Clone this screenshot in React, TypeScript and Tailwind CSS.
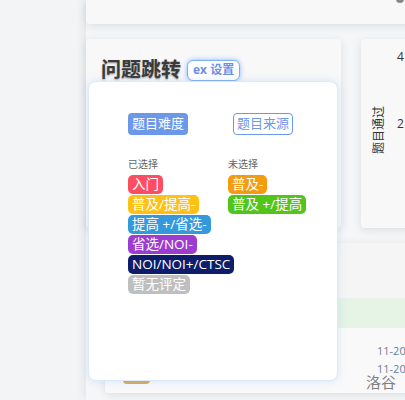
// Problem-jump panel with the difficulty filter popover open.

const FONT = "font-['Open_Sans','Noto_Sans_CJK_SC',sans-serif]";

const selected = [
  { label: "入门", bg: "bg-[#fe4c61]" },
  { label: "普及/提高-", bg: "bg-[#ffc116]" },
  { label: "提高 +/省选-", bg: "bg-[#3498db]" },
  { label: "省选/NOI-", bg: "bg-[#9d3dcf]" },
  { label: "NOI/NOI+/CTSC", bg: "bg-[#0e1d69]" },
  { label: "暂无评定", bg: "bg-[#bfbfbf]" },
];

const unselected = [
  { label: "普及-", bg: "bg-[#f39c11]" },
  { label: "普及 +/提高", bg: "bg-[#52c41a]" },
];

function Tag({ label, bg }: { label: string; bg: string }) {
  return (
    <span className={`inline-flex h-[19px] items-center rounded-[5px] px-1 text-[13.5px] leading-none text-white ${bg}`}>
      {label}
    </span>
  );
}

function DifficultyPopover() {
  return (
    <div className="absolute left-[2px] top-[81px] z-10 h-[300px] w-[250px] rounded-lg border border-[#dcebfc] bg-white pl-[39px] pt-[31px] shadow-[0_0_8px_rgba(120,170,240,0.25)]">
      {/* Mode switch */}
      <div className="flex gap-[45px]">
        <button className="h-[22px] w-[60px] rounded bg-[#6b98e8] text-[13px] text-white">题目难度</button>
        <button className="h-[22px] w-[60px] rounded border border-[#6b98e8] bg-white text-[13px] text-[#6b98e8]">
          题目来源
        </button>
      </div>

      {/* Selected / unselected difficulty tags */}
      <div className="mt-[22px] flex">
        <div className="w-[100px]">
          <p className="text-[10px] leading-[14px] text-[#666]">已选择</p>
          <div className="mt-[4px] flex flex-col items-start gap-px">
            {selected.map((t) => (
              <Tag key={t.label} {...t} />
            ))}
          </div>
        </div>
        <div>
          <p className="text-[10px] leading-[14px] text-[#666]">未选择</p>
          <div className="mt-[4px] flex flex-col items-start gap-px">
            {unselected.map((t) => (
              <Tag key={t.label} {...t} />
            ))}
          </div>
        </div>
      </div>
    </div>
  );
}

export default function App() {
  return (
    <div className={`relative flex h-[400px] w-[405px] overflow-hidden bg-[#f3f4f6] ${FONT}`}>
      <aside className="w-[86px] shrink-0" />

      <main className="relative flex w-[360px] shrink-0 flex-col bg-[#f5f6f8] shadow-[-3px_0_8px_rgba(0,0,0,0.06)]">
        {/* Top bar card */}
        <div className="flex h-[24px] justify-end rounded-b bg-[#f8f8f9] pr-[42px] shadow-[0_2px_10px_rgba(0,0,0,0.1)]">
          <span className="-mt-[5px] h-2 w-2 rounded-full bg-[#888]" />
        </div>

        <div className="mt-[15px] flex h-[189px] gap-[20px]">
          {/* Problem jump card */}
          <section className="w-[255px] shrink-0 rounded bg-[#f8f8f9] pl-[15px] pt-[17px] shadow-[0_2px_10px_rgba(0,0,0,0.1)]">
            <div className="flex items-center gap-[6px]">
              <h2 className="text-[20px] font-bold leading-[28px] text-[#3a3a3a] [text-shadow:0_1px_2px_rgba(0,0,0,0.35)]">
                问题跳转
              </h2>
              <button className="h-[21px] rounded-md border-[1.5px] border-[#80aef5] bg-white px-[5px] text-[12px] font-bold leading-none text-[#6d8fe3] shadow-[0_0_5px_rgba(110,170,255,0.8)]">
                ex 设置
              </button>
            </div>
          </section>

          {/* Chart card (axis only visible) */}
          <section className="flex flex-1 rounded bg-[#f8f8f9] shadow-[0_2px_10px_rgba(0,0,0,0.1)]">
            <div className="flex w-[32px] items-center justify-center pb-[8px] pl-[4px]">
              <span className="inline-block -rotate-90 whitespace-nowrap text-[12px] text-[#333]">题目通过</span>
            </div>
            <div className="flex flex-col pl-[4px] pt-[11px] text-[12px] leading-[14px] text-[#333]">
              <span>4</span>
              <span className="mt-[53px]">2</span>
            </div>
          </section>
        </div>

        {/* Recent records card */}
        <section className="ml-[19px] mt-[15px] flex h-[150px] flex-col overflow-hidden rounded bg-[#f9f9fa] shadow-[0_2px_10px_rgba(0,0,0,0.1)]">
          <div className="h-[55px] bg-[#f5f5f6]" />
          <div className="h-[30px] bg-[#e6f4e6]" />
          <div className="flex flex-1 justify-between pl-[18px]">
            <span className="mb-[9px] h-[4px] w-[27px] self-end rounded-b bg-[#d9a95b]" />
            <div className="flex w-[80px] flex-col items-start pt-[15px]">
              <span className="ml-[11px] text-[11px] leading-[16px] text-[#6b7f99]">11-20</span>
              <span className="ml-[11px] mt-[2px] text-[11px] leading-[16px] text-[#6b7f99]">11-20</span>
              <span className="-mt-[5px] text-[15px] leading-[20px] text-[#808080]">洛谷</span>
            </div>
          </div>
        </section>

        <DifficultyPopover />
      </main>
    </div>
  );
}
